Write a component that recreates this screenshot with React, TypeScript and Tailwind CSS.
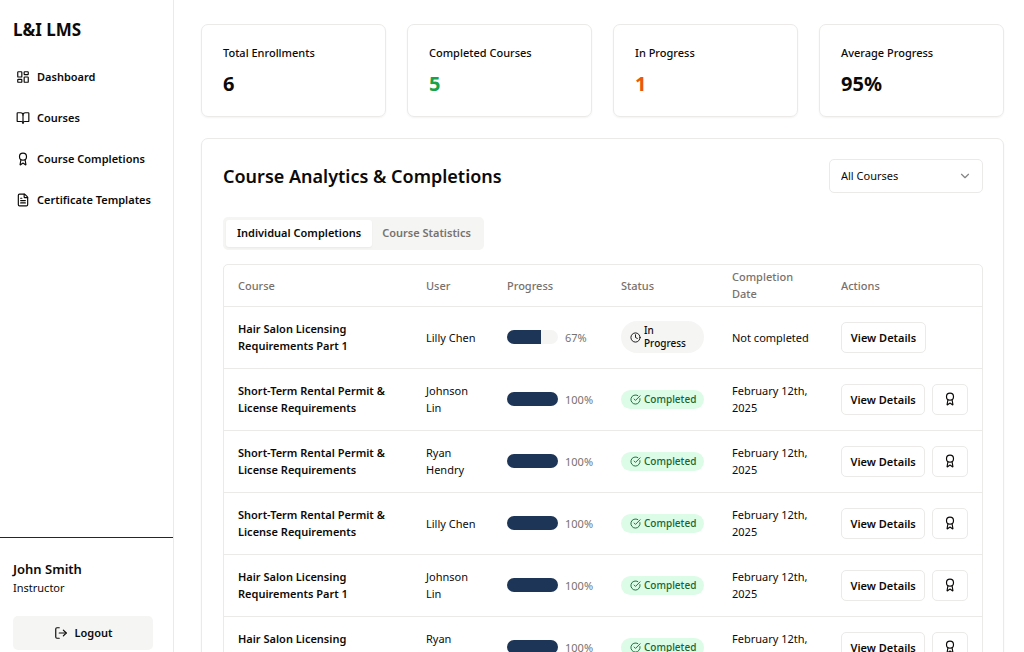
import {
  Award,
  BookOpen,
  ChevronDown,
  CircleCheckBig,
  Clock,
  FileText,
  LayoutDashboard,
  LogOut,
} from "lucide-react";

const navItems = [
  { icon: LayoutDashboard, label: "Dashboard" },
  { icon: BookOpen, label: "Courses" },
  { icon: Award, label: "Course Completions" },
  { icon: FileText, label: "Certificate Templates" },
];

const stats = [
  { label: "Total Enrollments", value: "6", color: "text-stone-950" },
  { label: "Completed Courses", value: "5", color: "text-[#16a34a]" },
  { label: "In Progress", value: "1", color: "text-[#ea580c]" },
  { label: "Average Progress", value: "95%", color: "text-stone-950" },
];

const hairSalon = "Hair Salon Licensing Requirements Part 1";
const rental = "Short-Term Rental Permit & License Requirements";

const completions = [
  { course: hairSalon, user: "Lilly Chen", progress: 67, date: null },
  { course: rental, user: "Johnson Lin", progress: 100, date: "February 12th, 2025" },
  { course: rental, user: "Ryan Hendry", progress: 100, date: "February 12th, 2025" },
  { course: rental, user: "Lilly Chen", progress: 100, date: "February 12th, 2025" },
  { course: hairSalon, user: "Johnson Lin", progress: 100, date: "February 12th, 2025" },
  { course: hairSalon, user: "Ryan Hendry", progress: 100, date: "February 12th, 2025" },
];

const Sidebar = () => (
  <aside className="flex w-[174px] shrink-0 flex-col border-r border-[#ebeae9]">
    <h1 className="px-[13px] pt-4 text-[17px] leading-7 font-bold">L&amp;I LMS</h1>
    <nav className="mt-4 flex flex-1 flex-col gap-[7px] px-[13px]">
      {navItems.map((item) => (
        <a
          key={item.label}
          href="#"
          className="flex h-[34px] items-center gap-[7px] rounded-md px-[3px] text-[11px] font-semibold whitespace-nowrap"
        >
          <item.icon className="size-[14px] shrink-0" />
          {item.label}
        </a>
      ))}
    </nav>
    <div className="border-t border-stone-800 px-[13px] pt-[21px] pb-0.5">
      <p className="text-[13px] leading-5 font-semibold">John Smith</p>
      <p className="text-[11px] leading-[17px]">Instructor</p>
      <button className="mt-5 flex h-[34px] w-[140px] items-center justify-center gap-[7px] rounded-[5px] bg-[#f5f5f4] text-[11px] font-semibold">
        <LogOut className="size-[14px]" />
        Logout
      </button>
    </div>
  </aside>
);

const StatusBadge = ({ done }: { done: boolean }) =>
  done ? (
    <span className="flex items-center gap-[3px] rounded-full bg-[#dcfce7] px-[9px] py-[3px] text-[10px] leading-[13px] font-medium text-[#166534]">
      <CircleCheckBig className="size-[11px] shrink-0" />
      Completed
    </span>
  ) : (
    <span className="flex items-center gap-[3px] rounded-full bg-[#f5f5f4] px-[9px] py-[3px] text-[10px] leading-[13px] font-medium">
      <Clock className="size-[11px] shrink-0" />
      In Progress
    </span>
  );

const CompletionsTable = () => (
  <div className="mt-[14px] rounded-[5px] border border-[#ebeae9]">
    <table className="w-full table-fixed text-left text-[11px] leading-[17px]">
      <thead>
        <tr className="h-[41px] text-[#78716c]">
          <th className="px-[14px] font-medium">Course</th>
          <th className="w-[81px] px-[14px] font-medium">User</th>
          <th className="w-[114px] px-[14px] font-medium">Progress</th>
          <th className="w-[111px] px-[14px] font-medium">Status</th>
          <th className="w-[109px] px-[14px] font-medium">Completion Date</th>
          <th className="w-[155px] px-[14px] font-medium">Actions</th>
        </tr>
      </thead>
      <tbody>
        {completions.map((row, index) => (
          <tr key={index} className="h-[62px] border-t border-[#ebeae9]">
            <td className="px-[14px] font-semibold">{row.course}</td>
            <td className="px-[14px]">{row.user}</td>
            <td className="px-[14px]">
              <div className="flex items-center gap-[7px]">
                <div className="h-[14px] w-[51px] shrink-0 overflow-hidden rounded-full bg-[#f5f5f4]">
                  <div className="h-full bg-[#1d3557]" style={{ width: `${row.progress}%` }} />
                </div>
                <span className="text-[#78716c]">{row.progress}%</span>
              </div>
            </td>
            <td className="px-[14px]">
              <StatusBadge done={row.progress === 100} />
            </td>
            <td className="px-[14px]">{row.date ?? "Not completed"}</td>
            <td className="px-[14px]">
              <div className="flex gap-[7px]">
                <button className="h-[31px] w-[85px] rounded-[5px] border border-[#ebeae9] font-semibold whitespace-nowrap">
                  View Details
                </button>
                {row.date && (
                  <button
                    aria-label="View certificate"
                    className="flex h-[31px] w-9 items-center justify-center rounded-[5px] border border-[#ebeae9]"
                  >
                    <Award className="size-[14px]" />
                  </button>
                )}
              </div>
            </td>
          </tr>
        ))}
      </tbody>
    </table>
  </div>
);

export default function App() {
  return (
    <div className="flex h-screen overflow-hidden bg-white font-['Segoe_UI','Noto_Sans',sans-serif] text-stone-950">
      <Sidebar />
      <main className="min-w-0 flex-1 overflow-y-auto pt-6 pr-5 pb-6 pl-[27px]">
        <div className="grid grid-cols-4 gap-[21px]">
          {stats.map((stat) => (
            <div key={stat.label} className="rounded-[7px] border border-[#ebeae9] px-[21px] pt-5 pb-[18px] shadow-xs">
              <p className="text-[11px] leading-4 font-medium">{stat.label}</p>
              <p className={`mt-[9px] text-[20px] leading-7 font-bold ${stat.color}`}>{stat.value}</p>
            </div>
          ))}
        </div>

        <section className="mt-[21px] rounded-[7px] border border-[#ebeae9] py-5 pr-5 pl-[21px] shadow-xs">
          <div className="flex items-center justify-between">
            <h2 className="text-[18px] leading-7 font-semibold">Course Analytics &amp; Completions</h2>
            <div className="relative">
              <select
                aria-label="Filter by course"
                className="h-[34px] w-[154px] appearance-none rounded-[5px] border border-[#ebeae9] bg-white pl-[11px] text-[11px]"
              >
                <option>All Courses</option>
              </select>
              <ChevronDown className="pointer-events-none absolute top-[10px] right-[11px] size-[14px] opacity-50" />
            </div>
          </div>

          <div
            role="tablist"
            className="mt-6 flex h-[33px] w-fit rounded-[5px] bg-[#f5f5f4] p-[3px] text-[11px] font-semibold whitespace-nowrap"
          >
            <button role="tab" aria-selected="true" className="rounded-[3px] bg-white px-[11px] shadow-xs">
              Individual Completions
            </button>
            <button role="tab" aria-selected="false" className="px-[10px] text-[#78716c]">
              Course Statistics
            </button>
          </div>

          <CompletionsTable />
        </section>
      </main>
    </div>
  );
}
